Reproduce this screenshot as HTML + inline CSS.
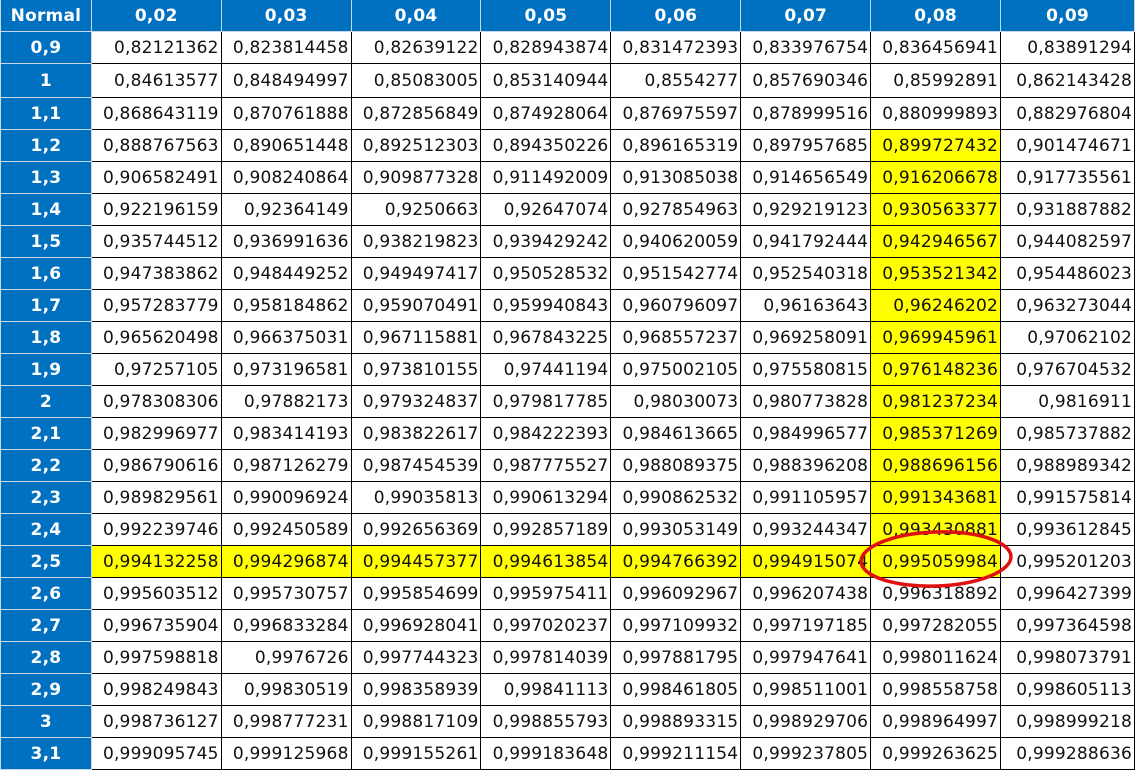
<!DOCTYPE html>
<html><head><meta charset="utf-8"><style>
body{margin:0;background:#fff;overflow:hidden;width:1135px;height:766px;position:relative}
table{border-collapse:collapse;table-layout:fixed;position:absolute;left:0;top:-1px;font-family:"DejaVu Sans",Verdana,sans-serif;font-size:17px}
td{border:1px solid #000;height:31px;padding:0 2px 0 0;text-align:right;color:#111;white-space:nowrap;overflow:hidden;box-sizing:border-box;letter-spacing:0.2px}
td:first-child,tr:first-child td{background:#0070C0;color:#fff;font-weight:bold;text-align:center;padding:0;border-color:#c9d6e3}
tr:first-child td{height:32px}
.y{background:#ffff00}
</style></head><body>
<table>
<colgroup><col style="width:91px"><col style="width:130px"><col style="width:130px"><col style="width:130px"><col style="width:130px"><col style="width:130px"><col style="width:130px"><col style="width:130px"><col style="width:134px"></colgroup>
<tr><td>Normal</td><td>0,02</td><td>0,03</td><td>0,04</td><td>0,05</td><td>0,06</td><td>0,07</td><td>0,08</td><td>0,09</td></tr>
<tr style="height:32px"><td>0,9</td><td>0,82121362</td><td>0,823814458</td><td>0,82639122</td><td>0,828943874</td><td>0,831472393</td><td>0,833976754</td><td>0,836456941</td><td>0,83891294</td></tr>
<tr style="height:34px"><td>1</td><td>0,84613577</td><td>0,848494997</td><td>0,85083005</td><td>0,853140944</td><td>0,8554277</td><td>0,857690346</td><td>0,85992891</td><td>0,862143428</td></tr>
<tr style="height:32px"><td>1,1</td><td>0,868643119</td><td>0,870761888</td><td>0,872856849</td><td>0,874928064</td><td>0,876975597</td><td>0,878999516</td><td>0,880999893</td><td>0,882976804</td></tr>
<tr style="height:32px"><td>1,2</td><td>0,888767563</td><td>0,890651448</td><td>0,892512303</td><td>0,894350226</td><td>0,896165319</td><td>0,897957685</td><td class="y">0,899727432</td><td>0,901474671</td></tr>
<tr style="height:32px"><td>1,3</td><td>0,906582491</td><td>0,908240864</td><td>0,909877328</td><td>0,911492009</td><td>0,913085038</td><td>0,914656549</td><td class="y">0,916206678</td><td>0,917735561</td></tr>
<tr style="height:32px"><td>1,4</td><td>0,922196159</td><td>0,92364149</td><td>0,9250663</td><td>0,92647074</td><td>0,927854963</td><td>0,929219123</td><td class="y">0,930563377</td><td>0,931887882</td></tr>
<tr style="height:32px"><td>1,5</td><td>0,935744512</td><td>0,936991636</td><td>0,938219823</td><td>0,939429242</td><td>0,940620059</td><td>0,941792444</td><td class="y">0,942946567</td><td>0,944082597</td></tr>
<tr style="height:32px"><td>1,6</td><td>0,947383862</td><td>0,948449252</td><td>0,949497417</td><td>0,950528532</td><td>0,951542774</td><td>0,952540318</td><td class="y">0,953521342</td><td>0,954486023</td></tr>
<tr style="height:32px"><td>1,7</td><td>0,957283779</td><td>0,958184862</td><td>0,959070491</td><td>0,959940843</td><td>0,960796097</td><td>0,96163643</td><td class="y">0,96246202</td><td>0,963273044</td></tr>
<tr style="height:32px"><td>1,8</td><td>0,965620498</td><td>0,966375031</td><td>0,967115881</td><td>0,967843225</td><td>0,968557237</td><td>0,969258091</td><td class="y">0,969945961</td><td>0,97062102</td></tr>
<tr style="height:32px"><td>1,9</td><td>0,97257105</td><td>0,973196581</td><td>0,973810155</td><td>0,97441194</td><td>0,975002105</td><td>0,975580815</td><td class="y">0,976148236</td><td>0,976704532</td></tr>
<tr style="height:32px"><td>2</td><td>0,978308306</td><td>0,97882173</td><td>0,979324837</td><td>0,979817785</td><td>0,98030073</td><td>0,980773828</td><td class="y">0,981237234</td><td>0,9816911</td></tr>
<tr style="height:32px"><td>2,1</td><td>0,982996977</td><td>0,983414193</td><td>0,983822617</td><td>0,984222393</td><td>0,984613665</td><td>0,984996577</td><td class="y">0,985371269</td><td>0,985737882</td></tr>
<tr style="height:32px"><td>2,2</td><td>0,986790616</td><td>0,987126279</td><td>0,987454539</td><td>0,987775527</td><td>0,988089375</td><td>0,988396208</td><td class="y">0,988696156</td><td>0,988989342</td></tr>
<tr style="height:32px"><td>2,3</td><td>0,989829561</td><td>0,990096924</td><td>0,99035813</td><td>0,990613294</td><td>0,990862532</td><td>0,991105957</td><td class="y">0,991343681</td><td>0,991575814</td></tr>
<tr style="height:32px"><td>2,4</td><td>0,992239746</td><td>0,992450589</td><td>0,992656369</td><td>0,992857189</td><td>0,993053149</td><td>0,993244347</td><td class="y">0,993430881</td><td>0,993612845</td></tr>
<tr style="height:32px"><td>2,5</td><td class="y">0,994132258</td><td class="y">0,994296874</td><td class="y">0,994457377</td><td class="y">0,994613854</td><td class="y">0,994766392</td><td class="y">0,994915074</td><td class="y">0,995059984</td><td>0,995201203</td></tr>
<tr style="height:32px"><td>2,6</td><td>0,995603512</td><td>0,995730757</td><td>0,995854699</td><td>0,995975411</td><td>0,996092967</td><td>0,996207438</td><td>0,996318892</td><td>0,996427399</td></tr>
<tr style="height:32px"><td>2,7</td><td>0,996735904</td><td>0,996833284</td><td>0,996928041</td><td>0,997020237</td><td>0,997109932</td><td>0,997197185</td><td>0,997282055</td><td>0,997364598</td></tr>
<tr style="height:32px"><td>2,8</td><td>0,997598818</td><td>0,9976726</td><td>0,997744323</td><td>0,997814039</td><td>0,997881795</td><td>0,997947641</td><td>0,998011624</td><td>0,998073791</td></tr>
<tr style="height:32px"><td>2,9</td><td>0,998249843</td><td>0,99830519</td><td>0,998358939</td><td>0,99841113</td><td>0,998461805</td><td>0,998511001</td><td>0,998558758</td><td>0,998605113</td></tr>
<tr style="height:32px"><td>3</td><td>0,998736127</td><td>0,998777231</td><td>0,998817109</td><td>0,998855793</td><td>0,998893315</td><td>0,998929706</td><td>0,998964997</td><td>0,998999218</td></tr>
<tr style="height:32px"><td>3,1</td><td>0,999095745</td><td>0,999125968</td><td>0,999155261</td><td>0,999183648</td><td>0,999211154</td><td>0,999237805</td><td>0,999263625</td><td>0,999288636</td></tr>
</table>
<svg width="1135" height="766" style="position:absolute;left:0;top:0">
<ellipse cx="936" cy="559" rx="75" ry="27" fill="none" stroke="#e01010" stroke-width="3.5" transform="rotate(-2 936 559)"/>
</svg>
</body></html>
